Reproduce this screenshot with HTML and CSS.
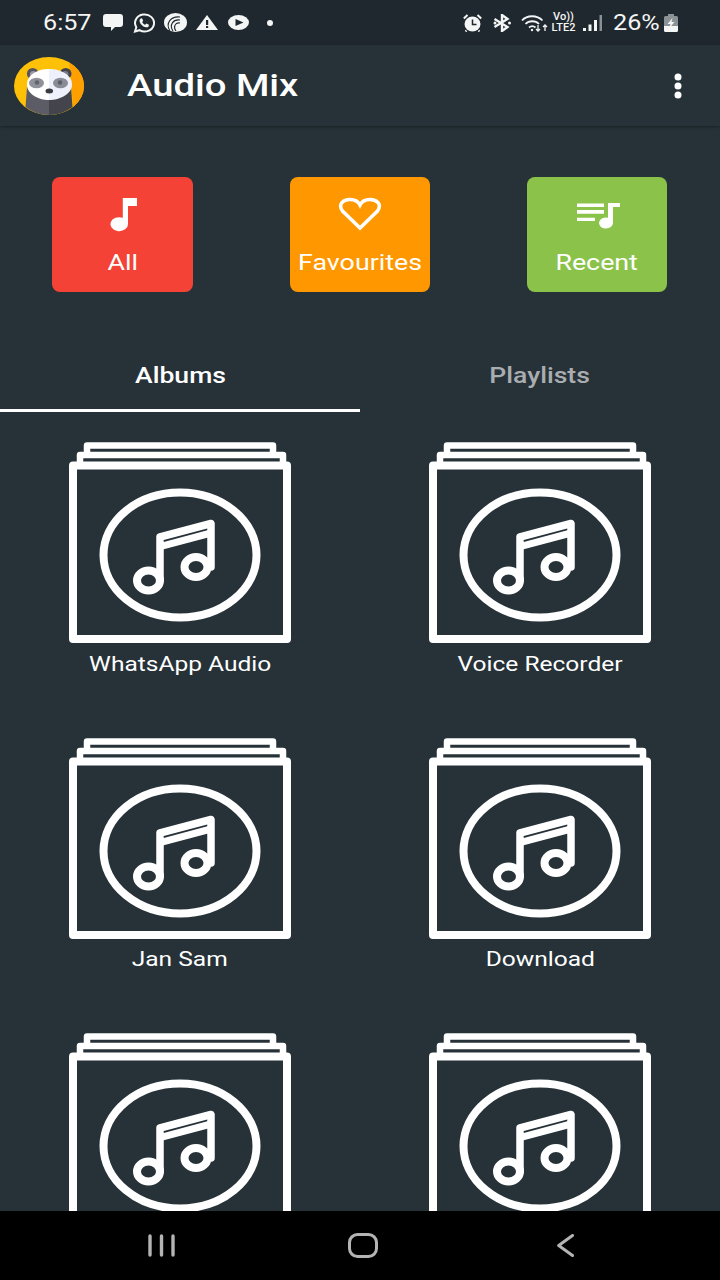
FILE: index.html
```html
<!DOCTYPE html>
<html lang="en">
<head>
<meta charset="utf-8">
<title>Audio Mix</title>
<link rel="stylesheet" href="styles.css">
</head>
<body>
<svg class="defs" width="0" height="0" aria-hidden="true">
  <symbol id="album" viewBox="0 0 222 202">
    <g fill="none" stroke="#fff" stroke-linejoin="round" stroke-linecap="round">
      <rect x="4" y="23.500" width="214" height="173.500" stroke-width="8" fill="#263238"/>
      <path d="M11 20V13H214V20" stroke-width="6.500"/>
      <path d="M18 10V3.500H204V10" stroke-width="6.500"/>
      <ellipse cx="111" cy="113" rx="76.500" ry="62.500" stroke-width="8"/>
      <ellipse cx="79.500" cy="138.500" rx="11.500" ry="10" stroke-width="8"/>
      <ellipse cx="127" cy="125" rx="11.500" ry="10" stroke-width="8"/>
      <path d="M91 138V95L142 81.500V125" stroke-width="7.500"/>
      <path d="M91 104.600L142 91" stroke-width="7" stroke-linecap="butt"/>
    </g>
  </symbol>
</svg>

<header class="status">
  <span class="time">6:57</span>
  <svg class="ic chat" viewBox="0 0 20 17"><path fill="#f4f5f5" d="M3 0H17a3 3 0 0 1 3 3V10a3 3 0 0 1-3 3H12L8 17V13H3a3 3 0 0 1-3-3V3a3 3 0 0 1 3-3z"/></svg>
  <svg class="ic wa" viewBox="0 0 22 20"><path fill="none" stroke="#f4f5f5" stroke-width="2" d="M2 18.500L3.300 14.200A9.500 8.500 0 1 1 6.500 17.200z"/><path fill="#f4f5f5" d="M7.500 5.500l1.500-.3 1.200 2.500-1 1.200c.6 1.300 1.700 2.300 3 2.900l1.200-1.200 2.500 1.200-.3 1.700c-.6.800-1.800 1-3 .7-3-.9-5.300-3.200-6-5.800-.2-1.200.2-2.200.9-2.700z"/></svg>
  <svg class="ic tor" viewBox="0 0 23 19"><ellipse cx="11.500" cy="9.500" rx="11.500" ry="9.500" fill="#f4f5f5"/><path fill="none" stroke="#1f282e" stroke-width="1.100" d="M6 18C1 10 7 3 16 4M9 18C5 12 9 6 16 7M12 18C9 14 11 9 16 10"/></svg>
  <svg class="ic warn" viewBox="0 0 22 15"><path fill="#f4f5f5" d="M11 0L22 15H0z"/><path fill="#1f282e" d="M10 5h2.200v5h-2.200zM10 11h2.200v2h-2.200z"/></svg>
  <svg class="ic play" viewBox="0 0 21 15"><ellipse cx="10.500" cy="7.500" rx="10.500" ry="7.500" fill="#f4f5f5"/><path fill="#1f282e" d="M7.500 4l8 3.500-8 3.500z"/></svg>
  <span class="dot"></span>
  <span class="spacer"></span>
  <svg class="ic alarm" viewBox="0 0 19 18"><ellipse cx="9.500" cy="10" rx="8" ry="7.500" fill="#f4f5f5"/><path fill="none" stroke="#1f282e" stroke-width="1.500" d="M9.500 5.500V10.500H13.500"/><path fill="none" stroke="#f4f5f5" stroke-width="2" d="M.8 4.500L4.500 1M18.200 4.500L14.500 1M3.500 16.500L2.500 17.500M15.500 16.500L16.500 17.500"/></svg>
  <svg class="ic bt" viewBox="0 0 18 18"><path fill="none" stroke="#f4f5f5" stroke-width="2.400" d="M1.500 5L14.500 13L9 17V1L14.500 5L1.500 13"/><circle cx="2" cy="9" r="1.500" fill="#f4f5f5"/><circle cx="16.500" cy="9" r="1.500" fill="#f4f5f5"/></svg>
  <svg class="ic wifi" viewBox="0 0 27 18"><g fill="none" stroke="#f4f5f5" stroke-width="1.800"><path d="M1 6.500C6 .8 16 .8 21.500 6.500"/><path d="M4.500 10C8 6.300 14.500 6.300 18 10"/><path d="M8 13.500C10 11.800 12.500 11.800 14.500 13.500"/></g><circle cx="11" cy="16" r="1.200" fill="#f4f5f5"/><path fill="none" stroke="#f4f5f5" stroke-width="1.300" d="M17 11V17M15 15l2 2 2-2M24 17V11M22 13l2-2 2 2"/></svg>
  <span class="lte"><span>Vo))</span><span>LTE2</span></span>
  <svg class="ic sig" viewBox="0 0 19 16"><path fill="#f4f5f5" d="M0 13h3v3H0zM5.500 9.500h3V16h-3zM11 5h3v11h-3z"/><path fill="#8a9094" d="M16.500 0H19V16H16.500z"/></svg>
  <span class="batt-text">26%</span>
  <svg class="ic batt" viewBox="0 0 14 18"><path fill="#8b9195" d="M4 0H10V2H12.500A1.500 1.500 0 0 1 14 3.500V12H0V3.500A1.500 1.500 0 0 1 1.500 2H4z"/><path fill="#f4f5f5" d="M0 12H14V16.500A1.500 1.500 0 0 1 12.500 18H1.500A1.500 1.500 0 0 1 0 16.500z"/><path fill="#f4f5f5" d="M8.500 4L3.500 10H6.500L5 14.500L10.500 8H7.500z"/></svg>
</header>

<div class="toolbar">
  <svg class="logo" viewBox="0 0 70 58">
    <ellipse cx="35" cy="29" rx="35" ry="29" fill="#ffc107"/>
    <path fill="#ffa000" d="M55 5.500A35 29 0 0 1 70 29A35 29 0 0 1 59 50L57 22z"/>
    <path fill="#5b5c66" d="M11.500 50L13 30H35V58A35 29 0 0 1 11.500 50z"/>
    <path fill="#43444c" d="M58.500 50L57 30H35V58A35 29 0 0 0 58.500 50z"/>
    <circle cx="18.700" cy="16.700" r="5.800" fill="#55565f"/>
    <circle cx="51.700" cy="16.700" r="5.800" fill="#43444c"/>
    <circle cx="19.200" cy="17.200" r="3.200" fill="#9b9ca5"/>
    <circle cx="51.200" cy="17.200" r="3.200" fill="#7d7f88"/>
    <path fill="#fff" d="M35 12C23 12 13 18 13 27.500C13 37 24 43 35 43z"/>
    <path fill="#eef1fb" d="M35 12C47 12 58 18 58 27.500C58 37 46 43 35 43z"/>
    <ellipse cx="22.500" cy="26" rx="7.500" ry="5.300" fill="#8f919b"/>
    <ellipse cx="46.500" cy="26" rx="7.500" ry="5.300" fill="#8a8c96"/>
    <circle cx="23" cy="25.500" r="2.300" fill="#62636c"/>
    <circle cx="46" cy="25.500" r="2.300" fill="#5d5e67"/>
    <ellipse cx="35.300" cy="34" rx="3.800" ry="2.500" fill="#3a3b42"/>
  </svg>
  <div class="title-wrap"><h1 class="title">Audio Mix</h1></div>
  <svg class="more" viewBox="0 0 8 26"><circle cx="4" cy="4" r="3.500"/><circle cx="4" cy="13" r="3.500"/><circle cx="4" cy="22" r="3.500"/></svg>
</div>

<main class="main">
  <section class="quick">
    <div class="qbtn red">
      <svg class="qicon" viewBox="0 0 44 34"><path fill="#fff" d="M21.800 1H36V9H27V27A8.800 7 0 1 1 21.800 20.800z"/></svg>
      <span class="qlabel">All</span>
    </div>
    <div class="qbtn orange">
      <svg class="qicon" viewBox="0 0 44 34"><path fill="none" stroke="#fff" stroke-width="3.500" d="M22 31L4.500 14C-.5 7 5.500 2.500 12 2.500C16 2.500 20 4 22 8C24 4 28 2.500 32 2.500C38.500 2.500 44.500 7 39.500 14z"/></svg>
      <span class="qlabel">Favourites</span>
    </div>
    <div class="qbtn green">
      <svg class="qicon" viewBox="0 0 44 34"><path fill="#fff" d="M2 6.500H29V10H2zM2 13H29V16.700H2zM2 20.700H20V24H2z"/><path fill="#fff" d="M33 6H45V10H38V26A7 5.500 0 1 1 33 20.800z"/></svg>
      <span class="qlabel">Recent</span>
    </div>
  </section>

  <nav class="tabs">
    <div class="tab active"><span class="wide">Albums</span></div>
    <div class="tab"><span class="wide">Playlists</span></div>
  </nav>

  <section class="grid">
    <div class="album"><svg class="cover"><use href="#album"/></svg><span class="name">WhatsApp Audio</span></div>
    <div class="album"><svg class="cover"><use href="#album"/></svg><span class="name">Voice Recorder</span></div>
    <div class="album"><svg class="cover"><use href="#album"/></svg><span class="name">Jan Sam</span></div>
    <div class="album"><svg class="cover"><use href="#album"/></svg><span class="name">Download</span></div>
    <div class="album"><svg class="cover"><use href="#album"/></svg></div>
    <div class="album"><svg class="cover"><use href="#album"/></svg></div>
  </section>
</main>

<footer class="navbar">
  <svg class="n-recent" viewBox="0 0 27 23"><path fill="none" stroke="#b4b4b4" stroke-width="3.400" stroke-linecap="round" d="M2 2V21M13.500 2V21M25 2V21"/></svg>
  <svg class="n-home" viewBox="0 0 30 25"><rect x="1.500" y="1.500" width="27" height="22" rx="8" fill="none" stroke="#b4b4b4" stroke-width="3"/></svg>
  <svg class="n-back" viewBox="0 0 17 23"><path fill="none" stroke="#b4b4b4" stroke-width="3" stroke-linecap="round" stroke-linejoin="round" d="M15.500 1.500L1.700 11.500L15.500 21.500"/></svg>
</footer>
</body>
</html>
```
FILE: styles.css
```css
* { box-sizing: border-box; }
html, body { margin: 0; padding: 0; }
body {
  width: 720px;
  height: 1280px;
  overflow: hidden;
  display: flex;
  flex-direction: column;
  background: #263238;
  font-family: Roboto, "Liberation Sans", sans-serif;
  color: #fff;
}
.defs { position: absolute; }

.status {
  height: 45px;
  flex: none;
  display: flex;
  align-items: center;
  padding: 0 42px 0 43px;
  background: #1f282e;
  color: #f4f5f5;
}
.time {
  font-size: 21.500px;
  width: 60px;
  transform: scaleX(1.17);
  transform-origin: left center;
}
.ic { display: block; flex: none; }
.chat { width: 20px; height: 17px; }
.wa { width: 22px; height: 20px; margin-left: 10px; }
.tor { width: 23px; height: 19px; margin-left: 9px; }
.warn { width: 22px; height: 15px; margin-left: 9px; }
.play { width: 21px; height: 15px; margin-left: 10px; }
.dot { width: 6px; height: 6px; border-radius: 50%; background: #f4f5f5; margin-left: 18px; }
.spacer { flex: 1; }
.alarm { width: 19px; height: 18px; }
.bt { width: 18px; height: 18px; margin-left: 11px; }
.wifi { width: 27px; height: 18px; margin-left: 10px; }
.lte {
  width: 27px;
  margin-left: 2px;
  display: flex;
  flex-direction: column;
  align-items: center;
  font-size: 11px;
  line-height: 10.500px;
  font-weight: 500;
}
.sig { width: 19px; height: 16px; margin-left: 6px; }
.batt-text {
  font-size: 21.500px;
  width: 47px;
  margin-left: 11px;
  white-space: nowrap;
  transform: scaleX(1.17);
  transform-origin: left center;
}
.batt { width: 14px; height: 18px; margin-left: 4px; }

.toolbar {
  height: 81px;
  flex: none;
  display: flex;
  align-items: center;
  padding: 0 38px 0 14px;
  background: #263238;
  box-shadow: 0 1px 3px rgba(0, 0, 0, .35);
  position: relative;
}
.logo { width: 70px; height: 58px; display: block; flex: none; }
.title-wrap { flex: 1; margin: 0 0 2px 42.500px; }
.title {
  margin: 0;
  width: fit-content;
  font-size: 32px;
  line-height: 38px;
  font-weight: 500;
  white-space: nowrap;
  transform: scaleX(1.195);
  transform-origin: left center;
}
.more { width: 8px; height: 26px; fill: #fff; display: block; }

.main {
  flex: 1;
  min-height: 0;
  overflow: hidden;
  background: #263238;
}

.quick {
  display: flex;
  justify-content: space-between;
  padding: 51px 53px 0 52px;
}
.qbtn {
  width: 140px;
  height: 115px;
  border-radius: 8px;
  display: flex;
  flex-direction: column;
  align-items: center;
  padding-top: 20px;
}
.red { background: #f44336; width: 141px; }
.orange { background: #ff9800; }
.green { background: #8bc34a; }
.qicon { width: 44px; height: 34px; display: block; overflow: visible; }
.qlabel {
  margin-top: 16px;
  font-size: 22.500px;
  line-height: 30px;
  white-space: nowrap;
  transform: scaleX(1.19);
}

.tabs {
  display: flex;
  margin-top: 48px;
  height: 72px;
}
.tab {
  flex: 1;
  text-align: center;
  font-size: 22.500px;
  line-height: 70px;
  font-weight: 500;
  color: #a9adb0;
}
.wide { display: inline-block; transform: scaleX(1.18); }
.tab.active { color: #fff; border-bottom: 3px solid #fff; }

.grid {
  display: grid;
  grid-template-columns: 360px 360px;
  grid-auto-rows: 295.500px;
  padding-top: 30px;
}
.album {
  display: flex;
  flex-direction: column;
  align-items: center;
}
.cover { width: 222px; height: 202px; display: block; flex: none; }
.name {
  margin-top: 5.500px;
  font-size: 20.800px;
  line-height: 28px;
  white-space: nowrap;
  transform: scaleX(1.18);
}

.navbar {
  height: 69px;
  flex: none;
  background: #000;
  display: grid;
  grid-template-columns: repeat(3, 202px);
  justify-items: center;
  align-items: center;
  padding-left: 60px;
}
.n-recent { width: 27px; height: 23px; display: block; }
.n-home { width: 30px; height: 25px; display: block; }
.n-back { width: 17px; height: 23px; display: block; }
```
